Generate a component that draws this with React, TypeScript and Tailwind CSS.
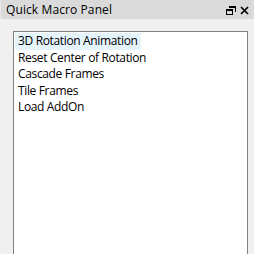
export default function App() {
  const items = [
    "3D Rotation Animation",
    "Reset Center of Rotation",
    "Cascade Frames",
    "Tile Frames",
    "Load AddOn",
  ];

  return (
    <div className="w-[254px] h-[254px] flex flex-col bg-[#f0f0f0] overflow-hidden font-['Open_Sans',sans-serif] text-black">
      {/* Title bar */}
      <div className="h-[19px] shrink-0 flex items-center justify-between pl-[5px] pr-[5px] bg-[#dadada] border-l border-[#e8e8e8]">
        <span className="text-[12px] leading-none tracking-[0.1px] pt-[1px]">Quick Macro Panel</span>
        <div className="flex items-center gap-[4px] pt-[2px]">
          <svg width="10" height="9" viewBox="0 0 10 9" className="shrink-0">
            <path d="M3 0.5h6.5v5.5" fill="none" stroke="#000" strokeWidth="1" />
            <rect x="3" y="0" width="7" height="2" fill="#000" />
            <rect x="0.5" y="3.5" width="6" height="5" fill="none" stroke="#000" strokeWidth="1" />
            <rect x="0" y="3" width="7" height="2" fill="#000" />
          </svg>
          <svg width="9" height="9" viewBox="0 0 9 9" className="shrink-0">
            <path d="M1 1l7 7M8 1l-7 7" stroke="#000" strokeWidth="1.7" />
          </svg>
        </div>
      </div>

      {/* List box */}
      <div className="flex-1 pt-[12px] pl-[13px] pr-[6px]">
        <div className="h-full bg-white border border-[#828282] border-b-0 pt-[1px] pl-[1px]">
          {items.map((item, i) => (
            <div
              key={item}
              className={
                i === 0
                  ? "h-[16.5px] flex items-center pl-[3px] pr-[3px] w-fit bg-[#e5f3fb] text-[12px] tracking-[-0.35px]"
                  : "h-[16.5px] flex items-center pl-[3px] text-[12px] tracking-[-0.35px]"
              }
            >
              {item}
            </div>
          ))}
        </div>
      </div>
    </div>
  );
}
